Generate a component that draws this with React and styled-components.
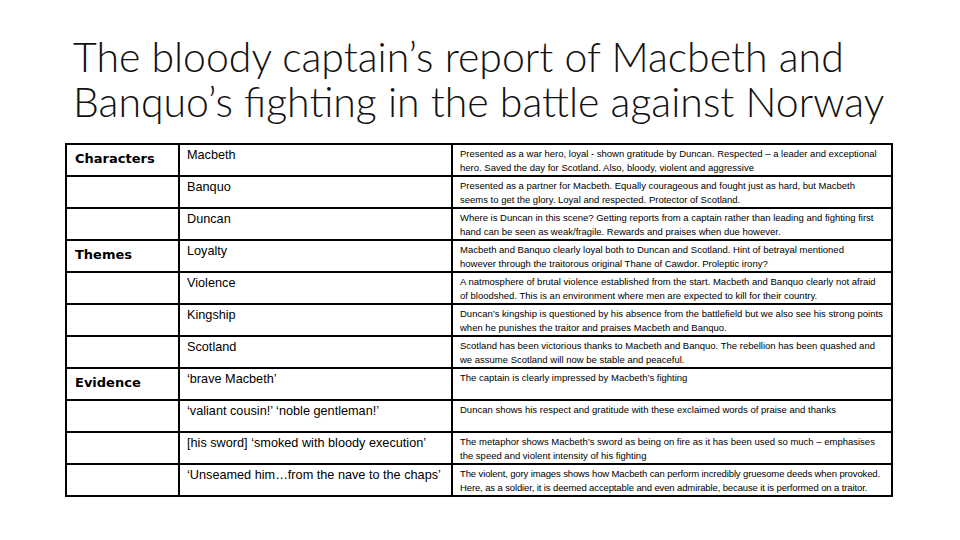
import styled, { createGlobalStyle } from 'styled-components';

const Global = createGlobalStyle`
  html, body {
    margin: 0;
    padding: 0;
    background: #ffffff;
  }
`;

const Slide = styled.div`
  width: 960px;
  height: 540px;
  background: #ffffff;
  box-sizing: border-box;
  padding: 34px 0 0 65px;
  overflow: hidden;
`;

const Title = styled.h1`
  margin: 0 0 19px 8px;
  font-family: Lato, "Open Sans", sans-serif;
  font-weight: 300;
  font-size: 41px;
  line-height: 45px;
  color: #111111;
  white-space: nowrap;
`;

const Table = styled.table`
  border-collapse: collapse;
  table-layout: fixed;
  width: 828px;
`;

const Row = styled.tr`
  height: 32px;
`;

const Cell = styled.td`
  border: 2px solid #000000;
  padding: 2px 7px 0 7px;
  vertical-align: top;
  box-sizing: border-box;
  color: #000000;
  overflow: hidden;
`;

const HeadCell = styled(Cell)`
  width: 113px;
  padding: 6px 8px 0 8px;
  font-family: "DejaVu Sans", Verdana, sans-serif;
  font-weight: bold;
  font-size: 13px;
  line-height: 16px;
`;

const TermCell = styled(Cell)`
  width: 273px;
  padding-top: 3px;
  font-family: "Liberation Sans", Arial, sans-serif;
  font-size: 12.7px;
  line-height: 15px;
  white-space: nowrap;
`;

const NoteCell = styled(Cell)`
  font-family: "Liberation Sans", Arial, sans-serif;
  font-size: 9.5px;
  line-height: 14px;
  white-space: nowrap;
  letter-spacing: ${(p) => (p.$tight ? '-0.12px' : '0')};
`;

const NoteLine = styled.span`
  display: block;
`;

const rows = [
  ['Characters', 'Macbeth', ['Presented as a war hero, loyal - shown gratitude by Duncan. Respected – a leader and exceptional', 'hero. Saved the day for Scotland. Also, bloody, violent and aggressive']],
  ['', 'Banquo', ['Presented as a partner for Macbeth. Equally courageous and fought just as hard, but Macbeth', 'seems to get the glory. Loyal and respected. Protector of Scotland.']],
  ['', 'Duncan', ['Where is Duncan in this scene? Getting reports from a captain rather than leading and fighting first', 'hand can be seen as weak/fragile. Rewards and praises when due however.']],
  ['Themes', 'Loyalty', ['Macbeth and Banquo clearly loyal both to Duncan and Scotland. Hint of betrayal mentioned', 'however through the traitorous original Thane of Cawdor. Proleptic irony?']],
  ['', 'Violence', ['A natmosphere of brutal violence established from the start. Macbeth and Banquo clearly not afraid', 'of bloodshed. This is an environment where men are expected to kill for their country.']],
  ['', 'Kingship', ['Duncan’s kingship is questioned by his absence from the battlefield but we also see his strong points', 'when he punishes the traitor and praises Macbeth and Banquo.']],
  ['', 'Scotland', ['Scotland has been victorious thanks to Macbeth and Banquo. The rebellion has been quashed and', 'we assume Scotland will now be stable and peaceful.']],
  ['Evidence', '‘brave Macbeth’', ['The captain is clearly impressed by Macbeth’s fighting']],
  ['', '‘valiant cousin!’ ‘noble gentleman!’', ['Duncan shows his respect and gratitude with these exclaimed words of praise and thanks']],
  ['', '[his sword] ‘smoked with bloody execution’', ['The metaphor shows Macbeth’s sword as being on fire as it has been used so much – emphasises', 'the speed and violent intensity of his fighting']],
  ['', '‘Unseamed him…from the nave to the chaps’', ['The violent, gory images shows how Macbeth can perform incredibly gruesome deeds when provoked.', 'Here, as a soldier, it is deemed acceptable and even admirable, because it is performed on a traitor.'], true],
];

export default function App() {
  return (
    <Slide>
      <Global />
      <Title>
        The bloody captain’s report of Macbeth and
        <br />
        Banquo’s fighting in the battle against Norway
      </Title>
      <Table>
        <tbody>
          {rows.map(([group, term, lines, tight], i) => (
            <Row key={i}>
              <HeadCell>{group}</HeadCell>
              <TermCell>{term}</TermCell>
              <NoteCell $tight={tight}>
                {lines.map((line, j) => (
                  <NoteLine key={j}>{line}</NoteLine>
                ))}
              </NoteCell>
            </Row>
          ))}
        </tbody>
      </Table>
    </Slide>
  );
}
